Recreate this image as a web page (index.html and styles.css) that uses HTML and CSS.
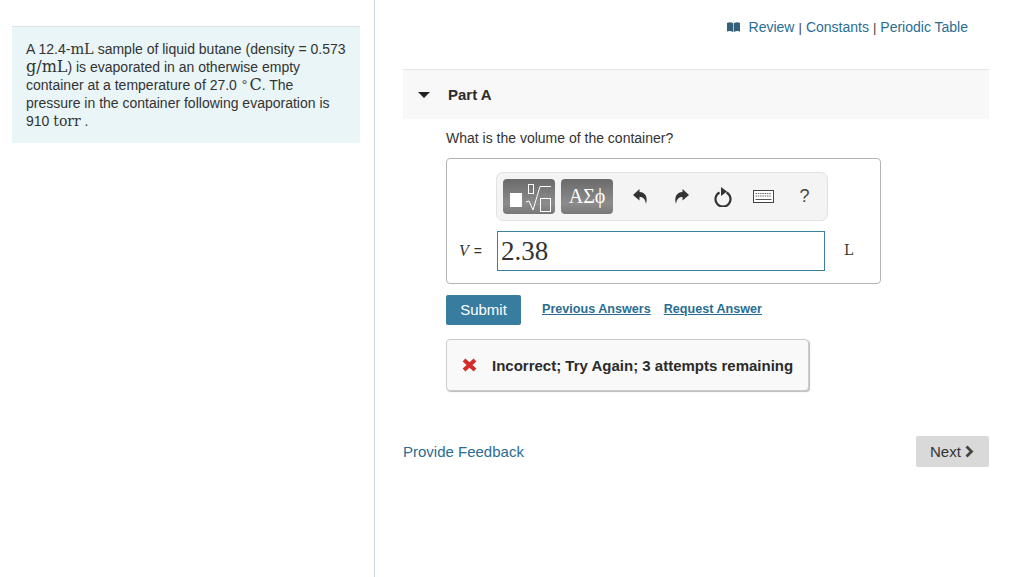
FILE: index.html
```html
<!DOCTYPE html>
<html lang="en">
<head>
  <meta charset="UTF-8">
  <title>Part A</title>
  <link rel="stylesheet" href="styles.css">
</head>
<body>
  <div class="page">
    <aside class="left-col">
      <div class="problem-box">
        <div class="line">A 12.4-<span class="math">mL</span> sample of liquid butane (density = 0.573</div>
        <div class="line"><span class="math big">g/mL</span>) is evaporated in an otherwise empty</div>
        <div class="line">container at a temperature of 27.0 <span class="deg">°</span><span class="math big">C</span>. The</div>
        <div class="line">pressure in the container following evaporation is</div>
        <div class="line">910 <span class="math small">torr</span> .</div>
      </div>
    </aside>
    <main class="right-col">
      <div class="top-links">
        <svg class="book-icon" width="13" height="10" viewBox="0 0 13 10"><path d="M0 1q3-1.500 5.800 0 .4 .2 .4 .5V10Q3 8.500 0 9.500zM13 1q-3-1.500-5.800 0-.4 .2-.4 .5V10q3-1.500 6.200-.5z" fill="#35607a"/></svg>
        <a href="#">Review</a><span class="sep">|</span><a href="#">Constants</a><span class="sep">|</span><a href="#">Periodic Table</a>
      </div>
      <div class="part-head">
        <span class="caret"></span>
        <span class="part-title">Part A</span>
      </div>
      <div class="part-body">
        <p class="question">What is the volume of the container?</p>
        <div class="answer-box">
          <div class="toolbar">
            <span class="tool-btn tmpl-btn">
              <svg width="48" height="33" viewBox="0 0 48 33" fill="none">
                <rect x="5" y="13" width="12" height="14" fill="#fff"/>
                <rect x="23.500" y="4.500" width="5" height="9" stroke="#fff"/>
                <path d="M21 22l3-1 4 9 7-23.500h11" stroke="#fff"/>
                <rect x="35.500" y="18.500" width="10" height="13" stroke="#fff"/>
              </svg>
            </span>
            <span class="tool-btn greek-btn">ΑΣϕ</span>
            <span class="tool-cell first"><svg width="17" height="17" viewBox="0 0 17 17"><path d="M7.500 1L1 7l6.500 5.500V9c3.500 0 5.500 1.500 6.500 7 2-7-.5-11.500-6.500-12z" fill="#333"/></svg></span>
            <span class="tool-cell"><svg width="17" height="17" viewBox="0 0 17 17"><path d="M9.500 1L16 7l-6.500 5.500V9C6 9 4 10.500 3 16 1 9 3.500 4.500 9.500 4z" fill="#333"/></svg></span>
            <span class="tool-cell"><svg width="18" height="20" viewBox="0 0 18 20" fill="none"><path d="M5.500 5.500a7.500 7.500 0 1 0 7 0" stroke="#333" stroke-width="2.200"/><path d="M7 0l6 4.500L7 9z" fill="#333"/></svg></span>
            <span class="tool-cell"><svg width="21" height="13" viewBox="0 0 21 13" fill="none"><rect x=".5" y=".5" width="20" height="12" fill="#fff" stroke="#444"/><path d="M2.500 3.500h16M2.500 6h16" stroke="#666" stroke-dasharray="1.500 .8"/><path d="M2.500 9.500h16" stroke="#555"/></svg></span>
            <span class="tool-cell help">?</span>
          </div>
          <div class="input-row">
            <span class="var-label"><i>V</i> <span class="eq">=</span></span>
            <div class="answer-input">2.38</div>
            <span class="unit">L</span>
          </div>
        </div>
        <div class="action-row">
          <button class="submit-btn">Submit</button>
          <a class="action-link" href="#">Previous Answers</a>
          <a class="action-link" href="#">Request Answer</a>
        </div>
        <div class="feedback">
          <svg width="15" height="14" viewBox="0 0 15 14"><path d="M2 2l11 10M13 2L2 12" stroke="#d52b2b" stroke-width="4"/></svg>
          <span>Incorrect; Try Again; 3 attempts remaining</span>
        </div>
      </div>
      <div class="bottom-row">
        <a class="provide" href="#">Provide Feedback</a>
        <button class="next-btn">Next
          <svg width="9" height="13" viewBox="0 0 9 13" fill="none"><path d="M1.500 1.500l5 5-5 5" stroke="#444" stroke-width="2.800"/></svg>
        </button>
      </div>
    </main>
  </div>
</body>
</html>
```

FILE: styles.css
```css
body {
  margin: 0;
  background: #fff;
  font-family: "Liberation Sans", Arial, sans-serif;
  font-size: 14px;
  color: #333;
  overflow: hidden;
}
a {
  color: #2a6d92;
  text-decoration: none;
}

.page {
  display: flex;
  height: 577px;
}
.left-col {
  width: 375px;
  flex: none;
  padding: 26px 14px 0 12px;
  box-sizing: border-box;
  border-right: 1px solid #c9d9e4;
}
.problem-box {
  background: #e9f5f7;
  border-top: 1px solid #dde4e8;
  padding: 13px 10px 0 14px;
  height: 117px;
  box-sizing: border-box;
  font-size: 14px;
  white-space: nowrap;
}
.line {
  height: 18px;
  line-height: 18px;
}
.math {
  font-family: "DejaVu Serif", "Liberation Serif", serif;
  font-size: 14.500px;
}
.math.big {
  font-size: 16px;
}
.math.small {
  font-size: 14px;
}
.deg {
  margin: 0 2px 0 1px;
  font-size: 14px;
}

.right-col {
  flex: 1;
  padding: 0 35px 0 28px;
}
.top-links {
  display: flex;
  align-items: center;
  justify-content: flex-end;
  height: 18px;
  margin-top: 18px;
  padding-right: 21px;
}
.book-icon {
  margin-right: 9px;
}
.sep {
  margin: 0 4px;
  color: #444;
  font-size: 13px;
}
.part-head {
  display: flex;
  align-items: center;
  height: 49px;
  margin-top: 33px;
  background: #f8f8f8;
  border-top: 1px solid #e4e4e4;
}
.caret {
  width: 0;
  height: 0;
  margin: 0 18px 0 15px;
  border-left: 6px solid transparent;
  border-right: 6px solid transparent;
  border-top: 6px solid #222;
}
.part-title {
  font-size: 15px;
  font-weight: bold;
  color: #2b2b2b;
}
.part-body {
  padding-left: 43px;
}
.question {
  margin: 10px 0 11px;
  line-height: 18px;
}
.answer-box {
  width: 435px;
  height: 126px;
  box-sizing: border-box;
  border: 1px solid #b3b3b3;
  border-radius: 4px;
  padding: 13px 0 0 12px;
}
.toolbar {
  display: flex;
  align-items: center;
  width: 332px;
  height: 49px;
  margin-left: 37px;
  box-sizing: border-box;
  padding-left: 6px;
  background: #f4f4f4;
  border: 1px solid #e2e2e2;
  border-radius: 7px;
}
.tool-btn {
  display: flex;
  align-items: center;
  justify-content: center;
  width: 52px;
  height: 35px;
  margin-right: 6px;
  border-radius: 4px;
  background: linear-gradient(#6a6a6a, #8c8c8c 70%, #777);
  color: #fff;
}
.greek-btn {
  font-family: "Liberation Serif", serif;
  font-size: 20px;
}
.tool-cell {
  display: flex;
  justify-content: center;
  align-items: center;
  width: 41px;
}
.tool-cell.first {
  margin-left: 1px;
}
.help {
  font-size: 18px;
  color: #444;
}
.input-row {
  display: flex;
  align-items: center;
  margin-top: 10px;
}
.var-label {
  width: 38px;
  font-family: "Liberation Serif", serif;
  font-size: 16px;
  white-space: nowrap;
}
.var-label i {
  margin-right: 1px;
}
.eq {
  font-family: "Liberation Sans", sans-serif;
  font-size: 14px;
}
.answer-input {
  width: 328px;
  height: 40px;
  box-sizing: border-box;
  border: 1px solid #3d7f9f;
  padding-left: 3px;
  font-family: "Liberation Serif", serif;
  font-size: 27px;
  line-height: 38px;
}
.unit {
  margin-left: 19px;
  margin-top: -2px;
  font-family: "DejaVu Serif", serif;
  font-size: 14px;
}
.action-row {
  display: flex;
  align-items: center;
  margin-top: 11px;
}
.submit-btn {
  width: 75px;
  height: 30px;
  margin-right: 21px;
  padding: 0 0 2px;
  border: none;
  border-radius: 2px;
  background: #387d9f;
  color: #fff;
  font-family: inherit;
  font-size: 15px;
}
.action-link {
  margin-right: 13px;
  margin-top: -3px;
  font-size: 12.600px;
  font-weight: bold;
  text-decoration: underline;
}
.feedback {
  display: flex;
  align-items: center;
  width: 363px;
  height: 52px;
  margin-top: 14px;
  box-sizing: border-box;
  padding-left: 15px;
  gap: 15px;
  background: #f9f9f9;
  border: 1px solid #ccc;
  border-radius: 4px;
  box-shadow: 1px 1px 1px #bbb;
  font-size: 15px;
  font-weight: bold;
  color: #2b2b2b;
}
.bottom-row {
  display: flex;
  align-items: center;
  justify-content: space-between;
  margin-top: 45px;
}
.provide {
  font-size: 15px;
}
.next-btn {
  display: flex;
  align-items: center;
  gap: 4px;
  width: 73px;
  height: 31px;
  padding: 0 5px 0 14px;
  border: none;
  border-radius: 2px;
  background: #d9d9d9;
  color: #333;
  font-family: inherit;
  font-size: 15px;
}
```
